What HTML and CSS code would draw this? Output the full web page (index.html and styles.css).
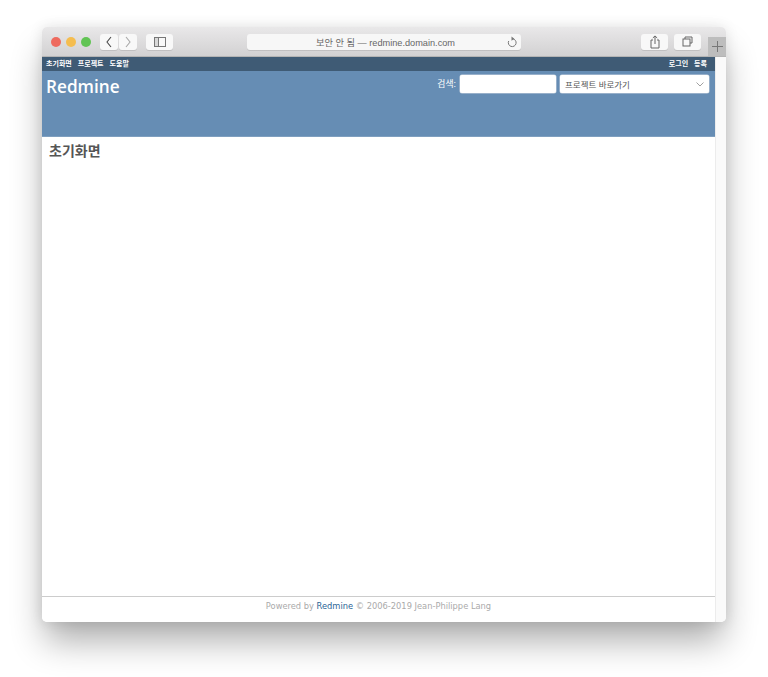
FILE: index.html
```html
<!DOCTYPE html>
<html lang="ko">
<head>
<meta charset="utf-8">
<title>Redmine</title>
<link rel="stylesheet" href="styles.css">
</head>
<body>
<div class="window">
  <div class="toolbar">
    <div class="lights"><i class="light red"></i><i class="light yellow"></i><i class="light green"></i></div>
    <div class="nav-group">
      <span class="btn nav"><svg width="10" height="14" viewBox="0 0 10 14"><path d="M7 2 3 7l4 5" fill="none" stroke="#4a4a4a" stroke-width="1.100"/></svg></span>
      <span class="btn nav"><svg width="10" height="14" viewBox="0 0 10 14"><path d="M3 2l4 5-4 5" fill="none" stroke="#a8a8a8" stroke-width="1.100"/></svg></span>
    </div>
    <span class="btn side"><svg width="12" height="10" viewBox="0 0 12 10"><rect x=".5" y=".5" width="11" height="9" fill="none" stroke="#777"/><path d="M4.500 .5v9" stroke="#777"/><path d="M1 1h3.500v8H1z" fill="#777" opacity=".25"/></svg></span>
    <div class="address">
      <span class="address-text">보안 안 됨 — redmine.domain.com</span>
      <svg class="reload" width="12" height="12" viewBox="0 0 12 12"><path d="M6.500 2.800A3.900 3.900 0 1 1 2.700 5" fill="none" stroke="#777" stroke-width="1"/><path d="M5.500 .6 8.300 2.800 5.500 4.800z" fill="#777"/></svg>
    </div>
    <span class="btn tool"><svg width="10" height="14" viewBox="0 0 10 14"><path d="M3 5H1v8h8V5H7M5 9V1M2.800 3 5 .9 7.200 3" fill="none" stroke="#666"/></svg></span>
    <span class="btn tool tool-last"><svg width="11" height="11" viewBox="0 0 11 11"><path d="M3 3V1h7v6H8" fill="none" stroke="#666"/><rect x="1" y="3" width="7" height="7" fill="none" stroke="#666"/></svg></span>
    <span class="newtab"><svg width="11" height="11" viewBox="0 0 11 11"><path d="M5.500 0v11M0 5.500h11" stroke="#777" stroke-width="1"/></svg></span>
  </div>
  <div class="viewport">
    <div class="page">
      <div class="topbar">
        <ul class="top-menu">
          <li>초기화면</li><li>프로젝트</li><li>도움말</li>
        </ul>
        <ul class="top-menu account">
          <li>로그인</li><li>등록</li>
        </ul>
      </div>
      <header class="header">
        <h1 class="logo">Redmine</h1>
        <div class="quick">
          <label class="search-label">검색:</label>
          <span class="search-input"></span>
          <span class="jump">프로젝트 바로가기
            <svg class="chev" width="8" height="5" viewBox="0 0 8 5"><path d="M.5.500 4 4 7.500.5" fill="none" stroke="#a0a0a0"/></svg>
          </span>
        </div>
      </header>
      <main class="content"><h2 class="heading">초기화면</h2></main>
      <footer class="footer">Powered by <a class="footer-link">Redmine</a> © 2006-2019 Jean-Philippe Lang</footer>
    </div>
    <div class="scrollbar"></div>
  </div>
</div>
</body>
</html>
```

FILE: styles.css
```css
html, body { margin: 0; padding: 0; background: #fff; }
body {
  width: 768px;
  height: 677px;
  padding: 27px 42px 0;
  box-sizing: border-box;
  overflow: hidden;
  font-family: "Liberation Sans", "Noto Sans CJK KR", sans-serif;
}
.window {
  width: 684px;
  height: 595px;
  display: flex;
  flex-direction: column;
  border-radius: 5px;
  overflow: hidden;
  box-shadow: 0 22px 34px -3px rgba(0,0,0,.32), 0 0 14px rgba(0,0,0,.1);
}
.toolbar {
  height: 29px;
  flex: none;
  display: flex;
  align-items: center;
  padding: 0 0 0 9px;
  background: linear-gradient(#e9e8e9, #d2d1d2);
  border-bottom: 1px solid #b4b4b4;
  box-sizing: content-box;
}
.lights { display: flex; gap: 5px; margin-right: 9px; }
.light { width: 10px; height: 10px; border-radius: 50%; display: block; }
.red { background: #ee6a5e; }
.yellow { background: #f5bd4f; }
.green { background: #61c454; }
.nav-group { display: flex; gap: 1px; margin-right: 9px; }
.btn {
  display: flex;
  align-items: center;
  justify-content: center;
  height: 16px;
  background: #f8f8f8;
  border-radius: 3px;
  box-shadow: 0 1px 0 rgba(0,0,0,.1);
}
.nav { width: 18px; }
.side { width: 27px; margin-right: 74px; }
.address {
  width: 274px;
  height: 16px;
  position: relative;
  display: flex;
  align-items: center;
  justify-content: center;
  background: #f7f7f7;
  border-radius: 3px;
  box-shadow: 0 1px 0 rgba(0,0,0,.1);
  margin-right: 120px;
}
.address-text { font-size: 9.200px; color: #666; margin-left: 3px; }
.reload { position: absolute; right: 3px; top: 2px; }
.tool { width: 27px; margin-right: 6px; }
.tool-last { margin-right: 7px; }
.newtab {
  width: 18px;
  height: 19px;
  margin-top: 10px;
  background: #bdbdbd;
  display: flex;
  align-items: center;
  justify-content: center;
}
.viewport { flex: 1; display: flex; min-height: 0; }
.page { width: 673px; display: flex; flex-direction: column; background: #fff; }
.scrollbar { width: 11px; background: #fafafa; border-left: 1px solid #ececec; box-sizing: border-box; }
.topbar {
  height: 14px;
  flex: none;
  display: flex;
  justify-content: space-between;
  align-items: center;
  padding: 0 8px 0 4px;
  background: #3f5b75;
}
.top-menu {
  display: flex;
  gap: 6px;
  list-style: none;
  margin: 0;
  padding: 0;
  font-size: 7px;
  font-weight: 700;
  color: #fff;
  line-height: 10px;
}
.header {
  height: 65px;
  flex: none;
  display: flex;
  justify-content: space-between;
  align-items: flex-start;
  padding: 0 6px 0 4px;
  background: #668db4;
  border-bottom: 1px solid #7f9fbf;
  box-sizing: content-box;
}
.logo {
  margin: 4px 0 0;
  font-family: "Open Sans", sans-serif;
  font-size: 17.200px;
  line-height: 24px;
  font-weight: 600;
  color: #fff;
}
.quick { display: flex; align-items: center; margin-top: 4px; }
.search-label { font-size: 8.800px; color: #fff; margin-right: 4px; position: relative; top: -1px; }
.search-input {
  width: 96px;
  height: 18px;
  background: #fff;
  border-radius: 2px;
  margin-right: 4px;
  box-shadow: 0 0 0 .5px #c9d4df;
}
.jump {
  width: 149px;
  height: 18px;
  box-sizing: border-box;
  padding: 0 5px;
  display: flex;
  align-items: center;
  justify-content: space-between;
  background: #fff;
  border-radius: 2px;
  font-size: 8.500px;
  color: #555;
  box-shadow: 0 0 0 .5px #c9d4df;
}
.content { flex: 1; padding: 4px 7px; min-height: 0; }
.heading {
  margin: 0;
  font-size: 14px;
  line-height: 20px;
  font-weight: 700;
  color: #555;
}
.footer {
  height: 25px;
  flex: none;
  border-top: 1px solid #ccc;
  text-align: center;
  font-family: "DejaVu Sans", sans-serif;
  font-size: 8.300px;
  line-height: 19px;
  color: #aaa;
}
.footer-link { color: #2a6496; }
```
